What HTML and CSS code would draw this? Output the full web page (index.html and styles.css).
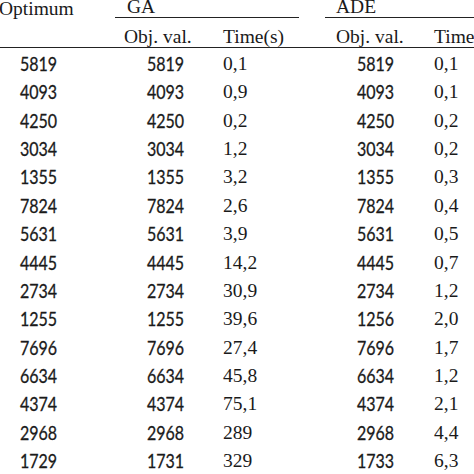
FILE: index.html
```html
<!DOCTYPE html>
<html>
<head>
<meta charset="utf-8">
<link rel="stylesheet" href="styles.css">
</head>
<body>
<div class="sheet">
  <div class="head">
    <div class="opt">Optimum</div>
    <div class="group ga">GA</div>
    <div class="group ade">ADE</div>
    <div class="sub blank"></div>
    <div class="sub obj">Obj. val.</div>
    <div class="sub time">Time(s)</div>
    <div class="sub obj2">Obj. val.</div>
    <div class="sub time2">Time(s)</div>
  </div>
  <div class="body" id="body"></div>
</div>
<script src="app.js"></script>
</body>
</html>
```

FILE: app.js
```js
var rows = [
  ["5819","5819","0,1","5819","0,1"],
  ["4093","4093","0,9","4093","0,1"],
  ["4250","4250","0,2","4250","0,2"],
  ["3034","3034","1,2","3034","0,2"],
  ["1355","1355","3,2","1355","0,3"],
  ["7824","7824","2,6","7824","0,4"],
  ["5631","5631","3,9","5631","0,5"],
  ["4445","4445","14,2","4445","0,7"],
  ["2734","2734","30,9","2734","1,2"],
  ["1255","1255","39,6","1256","2,0"],
  ["7696","7696","27,4","7696","1,7"],
  ["6634","6634","45,8","6634","1,2"],
  ["4374","4374","75,1","4374","2,1"],
  ["2968","2968","289","2968","4,4"],
  ["1729","1731","329","1733","6,3"]
];
var cls = ["n1","n2","t","n4","t2"];
var body = document.getElementById("body");
rows.forEach(function (r) {
  r.forEach(function (v, i) {
    var d = document.createElement("div");
    d.className = "cell " + cls[i];
    var s = document.createElement("span");
    s.textContent = v;
    d.appendChild(s);
    body.appendChild(d);
  });
});
```

FILE: styles.css
```css
html, body {
  margin: 0;
  padding: 0;
  background: #fff;
  overflow: hidden;
}
body {
  width: 474px;
  height: 474px;
  color: #1a1a1a;
}
.sheet {
  width: 474px;
}
.head, .body {
  display: grid;
  grid-template-columns: 115px 95px 115px 95px 54px;
}
.head {
  font-family: "Liberation Serif", "Times New Roman", serif;
  font-size: 19.5px;
  white-space: nowrap;
}
.opt {
  grid-column: 1;
  grid-row: 1;
  line-height: 18px;
  margin-left: -1px;
}
.group {
  grid-row: 1;
  line-height: 14px;
  padding-bottom: 3px;
  border-bottom: 1.3px solid #222;
}
.ga {
  grid-column: 2 / 4;
  padding-left: 12px;
  margin-right: 26px;
}
.ade {
  grid-column: 4 / 6;
  padding-left: 11px;
}
.sub {
  grid-row: 2;
  padding-top: 9px;
  line-height: 20px;
  border-bottom: 1.8px solid #222;
}
.blank { grid-column: 1; }
.obj { grid-column: 2; padding-left: 9px; }
.time { grid-column: 3; padding-left: 13px; }
.obj2 { grid-column: 4; padding-left: 11px; }
.time2 { grid-column: 5; padding-left: 14px; overflow: hidden; }

.body {
  padding-top: 2px;
  white-space: nowrap;
}
.cell {
  line-height: 28.36px;
  height: 28.36px;
}
.n1, .n2, .n4 {
  font-family: Lato, "Open Sans", sans-serif;
  font-size: 16px;
  text-align: right;
  -webkit-text-stroke: 0.25px #1a1a1a;
}
.n1 span, .n2 span, .n4 span {
  display: inline-block;
  transform: scaleY(1.15);
}
.n1 { padding-right: 58px; }
.n2 { padding-right: 26px; }
.n4 { padding-right: 26px; }
.t, .t2 {
  font-family: "Liberation Serif", "Times New Roman", serif;
  font-size: 19.5px;
}
.t { padding-left: 13px; }
.t2 { padding-left: 14px; }
```
